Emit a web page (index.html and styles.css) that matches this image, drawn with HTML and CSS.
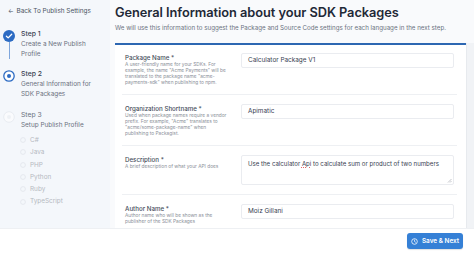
FILE: index.html
```html
<!DOCTYPE html>
<html>
<head>
<meta charset="utf-8">
<link rel="stylesheet" href="styles.css">
</head>
<body>
<div class="app">
  <div class="top">
    <aside class="sidebar">
      <a class="back"><span class="arrow">←</span> Back To Publish Settings</a>
      <ol class="steps">
        <li class="step done">
          <div class="rail">
            <span class="dot"><svg viewBox="0 0 12 12" width="12" height="12"><circle cx="6" cy="6" r="6" fill="#2c6bc3"/><path d="M3.4 6.2 5.2 7.9 8.7 4.3" fill="none" stroke="#fff" stroke-width="1.3" stroke-linecap="round" stroke-linejoin="round"/></svg></span>
            <span class="line"></span>
          </div>
          <div class="step-text">
            <div class="step-title">Step 1</div>
            <div class="step-desc">Create a New Publish<br>Profile</div>
          </div>
        </li>
        <li class="step current">
          <div class="rail">
            <span class="dot"><svg viewBox="0 0 12 12" width="12" height="12"><circle cx="6" cy="6" r="5.2" fill="#fff" stroke="#2c6bc3" stroke-width="1.3"/><circle cx="6" cy="6" r="2" fill="#2c6bc3"/></svg></span>
          </div>
          <div class="step-text">
            <div class="step-title">Step 2</div>
            <div class="step-desc">General Information for<br>SDK Packages</div>
          </div>
        </li>
        <li class="step todo">
          <div class="rail">
            <span class="dot"><svg viewBox="0 0 12 12" width="12" height="12"><circle cx="6" cy="6" r="5.3" fill="#fafbfd" stroke="#e8ecf1" stroke-width="1"/><circle cx="6" cy="6" r="2" fill="#eef1f5"/></svg></span>
          </div>
          <div class="step-text">
            <div class="step-title">Step 3</div>
            <div class="step-desc">Setup Publish Profile</div>
          </div>
        </li>
      </ol>
      <ul class="langs">
        <li><span class="licon"><svg viewBox="0 0 6 6" width="6" height="6"><circle cx="3" cy="3" r="2.4" fill="none" stroke="#e3e7ec" stroke-width="0.9"/></svg></span>C#</li>
        <li><span class="licon"><svg viewBox="0 0 6 6" width="6" height="6"><circle cx="3" cy="3" r="2.4" fill="none" stroke="#e3e7ec" stroke-width="0.9"/></svg></span>Java</li>
        <li><span class="licon"><svg viewBox="0 0 6 6" width="6" height="6"><circle cx="3" cy="3" r="2.4" fill="none" stroke="#e3e7ec" stroke-width="0.9"/></svg></span>PHP</li>
        <li><span class="licon"><svg viewBox="0 0 6 6" width="6" height="6"><circle cx="3" cy="3" r="2.4" fill="none" stroke="#e3e7ec" stroke-width="0.9"/></svg></span>Python</li>
        <li><span class="licon"><svg viewBox="0 0 6 6" width="6" height="6"><circle cx="3" cy="3" r="2.4" fill="none" stroke="#e3e7ec" stroke-width="0.9"/></svg></span>Ruby</li>
        <li><span class="licon"><svg viewBox="0 0 6 6" width="6" height="6"><circle cx="3" cy="3" r="2.4" fill="none" stroke="#e3e7ec" stroke-width="0.9"/></svg></span>TypeScript</li>
      </ul>
    </aside>
    <main class="main">
      <header class="head">
        <h1 class="title">General Information about your SDK Packages</h1>
        <p class="subtitle">We will use this information to suggest the Package and Source Code settings for each language in the next step.</p>
      </header>
      <div class="scroll">
        <section class="card">
          <div class="row">
            <div class="lbl">
              <div class="lbl-name">Package Name *</div>
              <div class="lbl-desc">A user-friendly name for your SDKs. For example, the name "Acme Payments" will be translated to the package name "acme-payments-sdk" when publishing to npm.</div>
            </div>
            <div class="field">Calculator Package V1</div>
          </div>
          <div class="row">
            <div class="lbl">
              <div class="lbl-name">Organization Shortname *</div>
              <div class="lbl-desc">Used when package names require a vendor prefix. For example, "Acme" translates to "acme/some-package-name" when publishing to Packagist.</div>
            </div>
            <div class="field">Apimatic</div>
          </div>
          <div class="row">
            <div class="lbl">
              <div class="lbl-name">Description *</div>
              <div class="lbl-desc">A brief description of what your API does</div>
            </div>
            <div class="field area">Use the calculator <span class="spell">Api</span> to calculate sum or product of two numbers<svg class="grip" viewBox="0 0 5 5" width="5" height="5"><path d="M4.5 1 1 4.5M4.5 3 3 4.5" stroke="#9aa0a8" stroke-width="0.6"/></svg></div>
          </div>
          <div class="row">
            <div class="lbl">
              <div class="lbl-name">Author Name *</div>
              <div class="lbl-desc">Author name who will be shown as the publisher of the SDK Packages</div>
            </div>
            <div class="field">Moiz Gillani</div>
          </div>
        </section>
        <div class="track"></div>
      </div>
    </main>
  </div>
  <footer class="foot">
    <button class="btn"><svg viewBox="0 0 8 8" width="7" height="7"><circle cx="4" cy="4" r="3.2" fill="none" stroke="#fff" stroke-width="0.9"/><path d="M4 2.3V4l1.2.8" fill="none" stroke="#fff" stroke-width="0.8" stroke-linecap="round"/></svg>Save &amp; Next</button>
  </footer>
</div>
</body>
</html>
```

FILE: styles.css
```css
* { box-sizing: border-box; margin: 0; padding: 0; }
html, body { width: 474px; height: 253px; overflow: hidden; }
body { font-family: Inter, "Noto Sans", sans-serif; background: #ffffff; color: #374151; }

.app { display: grid; grid-template-rows: 228px 25px; height: 253px; }
.top { display: flex; min-height: 0; }

.sidebar { width: 110px; flex: none; background: #f4f7fb; padding: 6px 0 0 3px; }
.back { display: block; padding-left: 5px; font-size: 6.4px; line-height: 10px; color: #4b5563; }
.back .arrow { font-size: 6px; margin-right: 1px; }

.steps { list-style: none; margin-top: 13px; }
.step { display: flex; }
.step.done { padding-bottom: 10px; }
.step.current { padding-bottom: 11px; }
.rail { width: 12px; display: flex; flex-direction: column; align-items: center; margin-top: 1px; }
.dot { display: block; width: 12px; height: 12px; }
.dot svg { display: block; }
.line { flex: 1; width: 1px; background: #7ea6dc; }
.step-text { margin-left: 6px; }
.step-title { font-size: 6.8px; line-height: 10px; font-weight: 500; color: #374151; }
.step-desc { font-size: 6.4px; line-height: 10px; color: #6b7280; }
.step.todo .step-title { color: #6b7280; font-weight: 400; }

.langs { list-style: none; margin-top: 4px; padding-left: 17px; }
.langs li { display: flex; align-items: center; font-size: 6.4px; line-height: 12.3px; height: 12.3px; color: #b4b9c1; }
.licon { width: 6px; height: 6px; margin-right: 4px; display: block; }
.licon svg { display: block; }

.main { flex: 1; display: flex; flex-direction: column; background: #f9fafc; min-width: 0; padding-left: 5px; }
.head { padding-top: 4px; height: 43px; }
.title { font-size: 12.8px; line-height: 17px; font-weight: 600; color: #1f2937; letter-spacing: -0.05px; }
.subtitle { margin-top: 3px; font-size: 6.2px; line-height: 8px; color: #6b7280; white-space: nowrap; }

.scroll { flex: 1; display: flex; min-height: 0; overflow: hidden; }
.card { width: 351px; flex: none; background: #ffffff; border-top: 2px solid #2d67b2; padding: 0 9px 0 7px; box-shadow: 0 0 1px rgba(0,0,0,0.08); }
.track { flex: 1; background: #f1f3f6; border-left: 1px solid #e7eaee; }

.row { display: grid; grid-template-columns: 116px 213px; padding: 8px 3px 9px; border-bottom: 1px solid #eef0f3; }
.row + .row { padding-top: 9px; }
.lbl { padding-right: 12px; padding-top: 1px; }
.lbl-name { font-size: 6.2px; line-height: 7px; font-weight: 500; color: #454d5a; }
.lbl-desc { font-size: 4.8px; line-height: 6px; color: #8b9099; margin-top: 0; }

.field { height: 15px; border: 1px solid #eaecf0; border-radius: 2px; padding: 0 6px; font-size: 6.4px; line-height: 13px; color: #374151; background: #fff; white-space: nowrap; overflow: hidden; }
.field.area { height: 30px; line-height: 7px; padding-top: 3.5px; position: relative; font-size: 6.1px; }
.spell { text-decoration: underline dotted #e06666; text-decoration-thickness: 0.6px; text-underline-offset: 1px; }
.grip { position: absolute; right: 1px; bottom: 1px; }

.foot { display: flex; justify-content: flex-end; align-items: center; padding-right: 11px; background: #fff; border-top: 1px solid #eef0f3; }
.btn { display: flex; align-items: center; gap: 4px; width: 56px; height: 16px; justify-content: center; border: none; border-radius: 3px; background: #3580d6; color: #fff; font-family: Inter, "Noto Sans", sans-serif; font-size: 6.4px; font-weight: 600; box-shadow: 0 1px 1px rgba(0,0,0,0.12); }
.btn svg { display: block; }
```
